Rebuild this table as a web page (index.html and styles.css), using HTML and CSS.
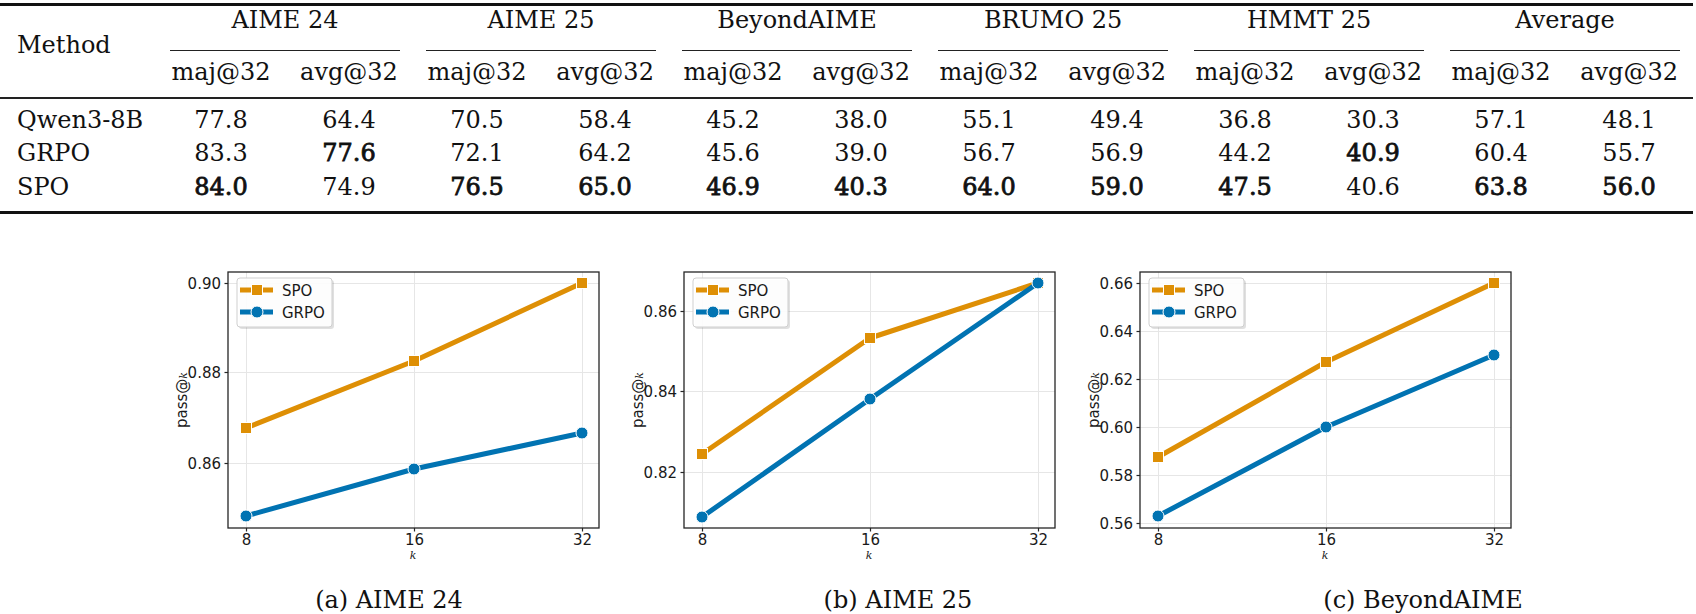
FILE: index.html
```html
<!DOCTYPE html>
<html lang="en">
<head>
<meta charset="utf-8">
<title>SPO results</title>
<link rel="stylesheet" href="styles.css">
</head>
<body>
<table class="results">
  <colgroup>
    <col class="c-method">
    <col class="c-num" span="12">
  </colgroup>
  <thead>
    <tr class="r-group">
      <th class="method" rowspan="2">Method</th>
      <th colspan="2"><div class="grp">AIME 24</div></th>
      <th colspan="2"><div class="grp">AIME 25</div></th>
      <th colspan="2"><div class="grp">BeyondAIME</div></th>
      <th colspan="2"><div class="grp">BRUMO 25</div></th>
      <th colspan="2"><div class="grp">HMMT 25</div></th>
      <th colspan="2"><div class="grp">Average</div></th>
    </tr>
    <tr class="r-sub">
      <th>maj@32</th><th>avg@32</th>
      <th>maj@32</th><th>avg@32</th>
      <th>maj@32</th><th>avg@32</th>
      <th>maj@32</th><th>avg@32</th>
      <th>maj@32</th><th>avg@32</th>
      <th>maj@32</th><th>avg@32</th>
    </tr>
  </thead>
  <tbody>
    <tr class="row-first">
      <td class="name">Qwen3-8B</td>
      <td>77.8</td><td>64.4</td><td>70.5</td><td>58.4</td><td>45.2</td><td>38.0</td>
      <td>55.1</td><td>49.4</td><td>36.8</td><td>30.3</td><td>57.1</td><td>48.1</td>
    </tr>
    <tr class="row-mid">
      <td class="name">GRPO</td>
      <td>83.3</td><td class="best">77.6</td><td>72.1</td><td>64.2</td><td>45.6</td><td>39.0</td>
      <td>56.7</td><td>56.9</td><td>44.2</td><td class="best">40.9</td><td>60.4</td><td>55.7</td>
    </tr>
    <tr class="row-last">
      <td class="name">SPO</td>
      <td class="best">84.0</td><td>74.9</td><td class="best">76.5</td><td class="best">65.0</td><td class="best">46.9</td><td class="best">40.3</td>
      <td class="best">64.0</td><td class="best">59.0</td><td class="best">47.5</td><td>40.6</td><td class="best">63.8</td><td class="best">56.0</td>
    </tr>
  </tbody>
</table>

<div class="charts">
  <!-- (a) AIME 24 -->
  <svg class="chart" width="456" height="300" viewBox="0 0 456 300">
    <g class="grid">
      <line x1="90.5" y1="10" x2="90.5" y2="266"/>
      <line x1="258.5" y1="10" x2="258.5" y2="266"/>
      <line x1="426.5" y1="10" x2="426.5" y2="266"/>
      <line x1="72" y1="21.5" x2="443" y2="21.5"/>
      <line x1="72" y1="110.5" x2="443" y2="110.5"/>
      <line x1="72" y1="201.5" x2="443" y2="201.5"/>
    </g>
    <g class="ticks">
      <line x1="68.5" y1="21.5" x2="72" y2="21.5"/>
      <line x1="68.5" y1="110.5" x2="72" y2="110.5"/>
      <line x1="68.5" y1="201.5" x2="72" y2="201.5"/>
      <line x1="90.5" y1="266" x2="90.5" y2="269.5"/>
      <line x1="258.5" y1="266" x2="258.5" y2="269.5"/>
      <line x1="426.5" y1="266" x2="426.5" y2="269.5"/>
    </g>
    <g class="tick-label ylab">
      <text x="65" y="26.8">0.90</text>
      <text x="65" y="115.8">0.88</text>
      <text x="65" y="206.8">0.86</text>
    </g>
    <g class="tick-label xlab">
      <text x="90.5" y="282.5">8</text>
      <text x="258.5" y="282.5">16</text>
      <text x="426.5" y="282.5">32</text>
    </g>
    <text class="axis-title" transform="translate(31 138) rotate(-90)">pass@<tspan class="math">k</tspan></text>
    <text class="axis-k" x="257" y="297">k</text>
    <polyline class="line spo" points="90,166 258,99 426,21"/>
    <g class="mk spo">
      <rect x="84.5" y="160.5" width="11" height="11"/>
      <rect x="252.5" y="93.5" width="11" height="11"/>
      <rect x="420.5" y="15.5" width="11" height="11"/>
    </g>
    <polyline class="line grpo" points="90,254 258,207 426,171"/>
    <g class="mk grpo">
      <circle cx="90" cy="254" r="6"/>
      <circle cx="258" cy="207" r="6"/>
      <circle cx="426" cy="171" r="6"/>
    </g>
    <rect class="frame" x="72" y="10" width="371" height="256"/>
    <g class="legend">
      <rect class="legend-shadow" x="83" y="18" width="95" height="49" rx="3"/>
      <rect class="legend-box" x="81" y="16" width="95" height="49" rx="3"/>
      <line class="line spo" x1="84" y1="28" x2="117" y2="28"/>
      <rect class="mk-one spo" x="95.5" y="22.5" width="11" height="11"/>
      <text class="legend-text" x="126" y="33.5">SPO</text>
      <line class="line grpo" x1="84" y1="50" x2="117" y2="50"/>
      <circle class="mk-one grpo" cx="101" cy="50" r="6"/>
      <text class="legend-text" x="126" y="55.5">GRPO</text>
    </g>
  </svg>

  <!-- (b) AIME 25 -->
  <svg class="chart" width="456" height="300" viewBox="0 0 456 300">
    <g class="grid">
      <line x1="90.5" y1="10" x2="90.5" y2="266"/>
      <line x1="258.5" y1="10" x2="258.5" y2="266"/>
      <line x1="426.5" y1="10" x2="426.5" y2="266"/>
      <line x1="72" y1="49.5" x2="443" y2="49.5"/>
      <line x1="72" y1="129.5" x2="443" y2="129.5"/>
      <line x1="72" y1="210.5" x2="443" y2="210.5"/>
    </g>
    <g class="ticks">
      <line x1="68.5" y1="49.5" x2="72" y2="49.5"/>
      <line x1="68.5" y1="129.5" x2="72" y2="129.5"/>
      <line x1="68.5" y1="210.5" x2="72" y2="210.5"/>
      <line x1="90.5" y1="266" x2="90.5" y2="269.5"/>
      <line x1="258.5" y1="266" x2="258.5" y2="269.5"/>
      <line x1="426.5" y1="266" x2="426.5" y2="269.5"/>
    </g>
    <g class="tick-label ylab">
      <text x="65" y="54.8">0.86</text>
      <text x="65" y="134.8">0.84</text>
      <text x="65" y="215.8">0.82</text>
    </g>
    <g class="tick-label xlab">
      <text x="90.5" y="282.5">8</text>
      <text x="258.5" y="282.5">16</text>
      <text x="426.5" y="282.5">32</text>
    </g>
    <text class="axis-title" transform="translate(31 138) rotate(-90)">pass@<tspan class="math">k</tspan></text>
    <text class="axis-k" x="257" y="297">k</text>
    <polyline class="line spo" points="90,192 258,76 426,21"/>
    <g class="mk spo">
      <rect x="84.5" y="186.5" width="11" height="11"/>
      <rect x="252.5" y="70.5" width="11" height="11"/>
      <rect x="420.5" y="15.5" width="11" height="11"/>
    </g>
    <polyline class="line grpo" points="90,255 258,137 426,21"/>
    <g class="mk grpo">
      <circle cx="90" cy="255" r="6"/>
      <circle cx="258" cy="137" r="6"/>
      <circle cx="426" cy="21" r="6"/>
    </g>
    <rect class="frame" x="72" y="10" width="371" height="256"/>
    <g class="legend">
      <rect class="legend-shadow" x="83" y="18" width="95" height="49" rx="3"/>
      <rect class="legend-box" x="81" y="16" width="95" height="49" rx="3"/>
      <line class="line spo" x1="84" y1="28" x2="117" y2="28"/>
      <rect class="mk-one spo" x="95.5" y="22.5" width="11" height="11"/>
      <text class="legend-text" x="126" y="33.5">SPO</text>
      <line class="line grpo" x1="84" y1="50" x2="117" y2="50"/>
      <circle class="mk-one grpo" cx="101" cy="50" r="6"/>
      <text class="legend-text" x="126" y="55.5">GRPO</text>
    </g>
  </svg>

  <!-- (c) BeyondAIME -->
  <svg class="chart" width="456" height="300" viewBox="0 0 456 300">
    <g class="grid">
      <line x1="90.5" y1="10" x2="90.5" y2="266"/>
      <line x1="258.5" y1="10" x2="258.5" y2="266"/>
      <line x1="426.5" y1="10" x2="426.5" y2="266"/>
      <line x1="72" y1="21.5" x2="443" y2="21.5"/>
      <line x1="72" y1="69.5" x2="443" y2="69.5"/>
      <line x1="72" y1="117.5" x2="443" y2="117.5"/>
      <line x1="72" y1="165.5" x2="443" y2="165.5"/>
      <line x1="72" y1="213.5" x2="443" y2="213.5"/>
      <line x1="72" y1="261.5" x2="443" y2="261.5"/>
    </g>
    <g class="ticks">
      <line x1="68.5" y1="21.5" x2="72" y2="21.5"/>
      <line x1="68.5" y1="69.5" x2="72" y2="69.5"/>
      <line x1="68.5" y1="117.5" x2="72" y2="117.5"/>
      <line x1="68.5" y1="165.5" x2="72" y2="165.5"/>
      <line x1="68.5" y1="213.5" x2="72" y2="213.5"/>
      <line x1="68.5" y1="261.5" x2="72" y2="261.5"/>
      <line x1="90.5" y1="266" x2="90.5" y2="269.5"/>
      <line x1="258.5" y1="266" x2="258.5" y2="269.5"/>
      <line x1="426.5" y1="266" x2="426.5" y2="269.5"/>
    </g>
    <g class="tick-label ylab">
      <text x="65" y="26.8">0.66</text>
      <text x="65" y="74.8">0.64</text>
      <text x="65" y="122.8">0.62</text>
      <text x="65" y="170.8">0.60</text>
      <text x="65" y="218.8">0.58</text>
      <text x="65" y="266.8">0.56</text>
    </g>
    <g class="tick-label xlab">
      <text x="90.5" y="282.5">8</text>
      <text x="258.5" y="282.5">16</text>
      <text x="426.5" y="282.5">32</text>
    </g>
    <text class="axis-title" transform="translate(31 138) rotate(-90)">pass@<tspan class="math">k</tspan></text>
    <text class="axis-k" x="257" y="297">k</text>
    <polyline class="line spo" points="90,195 258,100 426,21"/>
    <g class="mk spo">
      <rect x="84.5" y="189.5" width="11" height="11"/>
      <rect x="252.5" y="94.5" width="11" height="11"/>
      <rect x="420.5" y="15.5" width="11" height="11"/>
    </g>
    <polyline class="line grpo" points="90,254 258,165 426,93"/>
    <g class="mk grpo">
      <circle cx="90" cy="254" r="6"/>
      <circle cx="258" cy="165" r="6"/>
      <circle cx="426" cy="93" r="6"/>
    </g>
    <rect class="frame" x="72" y="10" width="371" height="256"/>
    <g class="legend">
      <rect class="legend-shadow" x="83" y="18" width="95" height="49" rx="3"/>
      <rect class="legend-box" x="81" y="16" width="95" height="49" rx="3"/>
      <line class="line spo" x1="84" y1="28" x2="117" y2="28"/>
      <rect class="mk-one spo" x="95.5" y="22.5" width="11" height="11"/>
      <text class="legend-text" x="126" y="33.5">SPO</text>
      <line class="line grpo" x1="84" y1="50" x2="117" y2="50"/>
      <circle class="mk-one grpo" cx="101" cy="50" r="6"/>
      <text class="legend-text" x="126" y="55.5">GRPO</text>
    </g>
  </svg>
</div>

<div class="captions">
  <div class="cap cap-a">(a) AIME 24</div>
  <div class="cap cap-b">(b) AIME 25</div>
  <div class="cap cap-c">(c) BeyondAIME</div>
</div>
</body>
</html>
```

FILE: styles.css
```css
html, body {
  margin: 0;
  padding: 0;
  background: #fff;
}

body {
  width: 1696px;
  height: 614px;
  overflow: hidden;
  color: #111;
  font-family: "DejaVu Serif", "Liberation Serif", serif;
}

/* ---------- table ---------- */
.results {
  border-collapse: separate;
  border-spacing: 0;
  table-layout: fixed;
  width: 1693px;
  margin-top: 3px;
  border-top: 3px solid #111;
  border-bottom: 3px solid #111;
  font-size: 24px;
  line-height: 28px;
}

.c-method { width: 157px; }
.c-num { width: 128px; }

.results th,
.results td {
  padding: 0;
  font-weight: normal;
  text-align: center;
  white-space: nowrap;
  vertical-align: top;
}

.results th.method {
  text-align: left;
  padding: 25px 0 0 17px;
  border-bottom: 2px solid #222;
}

.grp {
  margin: 0 13px;
  padding: 0 0 16px;
  border-bottom: 1px solid #222;
}

.r-sub th {
  padding: 7px 0 11px;
  border-bottom: 2px solid #222;
}

.row-first td { padding: 7px 0 3px; }
.row-mid td { padding: 2px 0 3px; }
.row-last td { padding: 3px 0 10px; }

.results td.name {
  text-align: left;
  padding-left: 17px;
}

/* semi-bold emphasis: keeps the regular advance widths like the reference */
.results td.best {
  font-weight: normal;
  -webkit-text-stroke: 0.8px currentColor;
}

/* ---------- charts ---------- */
.charts {
  display: flex;
  margin-top: 48px;
  padding-left: 156px;
}

.chart {
  display: block;
  flex: 0 0 auto;
}

.grid line {
  stroke: #e6e6e6;
  stroke-width: 1;
}

.ticks line {
  stroke: #262626;
  stroke-width: 1.2;
}

.frame {
  fill: none;
  stroke: #262626;
  stroke-width: 1.3;
}

.tick-label text {
  font-family: "DejaVu Sans", sans-serif;
  font-size: 15px;
  fill: #1a1a1a;
}

.ylab text { text-anchor: end; }
.xlab text { text-anchor: middle; }

.axis-title {
  font-family: "DejaVu Sans", sans-serif;
  font-size: 15px;
  fill: #1a1a1a;
  text-anchor: middle;
}

.axis-title .math,
.axis-k {
  font-family: "DejaVu Serif", serif;
  font-style: italic;
  font-size: 11px;
}

.axis-k {
  fill: #1a1a1a;
  text-anchor: middle;
}

.line {
  fill: none;
  stroke-width: 5;
  stroke-linejoin: round;
}

.line.spo { stroke: #de8f05; }
.line.grpo { stroke: #0173b2; }

.mk rect, .mk circle, .mk-one {
  stroke: #fff;
  stroke-width: 1;
}

.mk.spo rect, .mk-one.spo { fill: #de8f05; }
.mk.grpo circle, .mk-one.grpo { fill: #0173b2; }

.legend-shadow {
  fill: #000;
  opacity: 0.12;
}

.legend-box {
  fill: #fff;
  fill-opacity: 0.92;
  stroke: #cfcfcf;
  stroke-width: 1;
}

.legend-text {
  font-family: "DejaVu Sans", sans-serif;
  font-size: 15px;
  fill: #1a1a1a;
}

/* ---------- captions ---------- */
.captions {
  display: flex;
  margin-top: 24px;
  padding-left: 135px;
  font-size: 24px;
  line-height: 28px;
}

.cap {
  flex: 0 0 auto;
  text-align: center;
  white-space: nowrap;
}

.cap-a { width: 508px; }
.cap-b { width: 510px; }
.cap-c { width: 540px; }
```
